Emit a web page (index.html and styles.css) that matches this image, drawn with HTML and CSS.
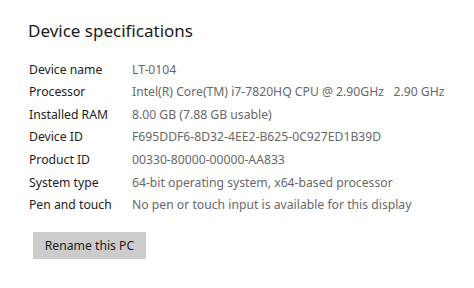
FILE: index.html
```html
<!DOCTYPE html>
<html>
<head>
<meta charset="utf-8">
<link rel="stylesheet" href="styles.css">
</head>
<body>
<div class="page">
  <h1 class="title">Device specifications</h1>
  <div class="specs">
    <div class="label">Device name</div><div class="value">LT-0104</div>
    <div class="label">Processor</div><div class="value">Intel(R) Core(TM) i7-7820HQ CPU @ 2.90GHz&nbsp;&nbsp; 2.90 GHz</div>
    <div class="label">Installed RAM</div><div class="value">8.00 GB (7.88 GB usable)</div>
    <div class="label">Device ID</div><div class="value">F695DDF6-8D32-4EE2-B625-0C927ED1B39D</div>
    <div class="label">Product ID</div><div class="value">00330-80000-00000-AA833</div>
    <div class="label">System type</div><div class="value">64-bit operating system, x64-based processor</div>
    <div class="label">Pen and touch</div><div class="value">No pen or touch input is available for this display</div>
  </div>
  <button class="btn">Rename this PC</button>
</div>
</body>
</html>
```

FILE: styles.css
```css
html, body {
  margin: 0;
  padding: 0;
  background: #ffffff;
}
.page {
  font-family: "Noto Sans", "Open Sans", sans-serif;
  padding: 18.9px 0 0 28px;
  display: flex;
  flex-direction: column;
  align-items: flex-start;
}
.title {
  margin: 0;
  font-size: 17px;
  font-weight: 400;
  color: #1a1a1a;
  line-height: 24px;
}
.specs {
  display: grid;
  grid-template-columns: 103px auto;
  margin: 15.7px 0 0 1px;
  font-size: 12.2px;
  line-height: 22.6px;
}
.label {
  color: #1c1c1c;
}
.value {
  color: #686868;
  white-space: nowrap;
}
.btn {
  margin: 15.3px 0 0 5px;
  width: 113px;
  height: 27px;
  border: none;
  background: #cccccc;
  color: #1a1a1a;
  font-family: "Noto Sans", "Open Sans", sans-serif;
  font-size: 12.2px;
  padding: 0;
}
```
